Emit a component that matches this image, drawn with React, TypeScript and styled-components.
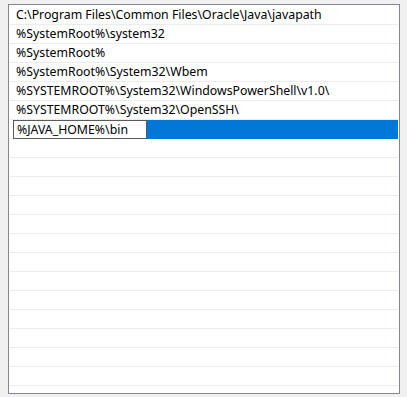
import React from 'react';
import styled, { createGlobalStyle } from 'styled-components';

const GlobalStyle = createGlobalStyle`
  html, body {
    margin: 0;
    background: #f0f0f0;
  }
`;

const Page = styled.div`
  width: 407px;
  height: 397px;
  padding: 4px 0 0 8px;
  box-sizing: border-box;
`;

const ListBox = styled.div`
  width: 392px;
  height: 390px;
  box-sizing: border-box;
  border: 1px solid #828790;
  padding: 1px;
  background: #fff;
  display: flex;
  flex-direction: column;
  overflow: hidden;
`;

const Row = styled.div<{ $editing?: boolean }>`
  flex: 0 0 18px;
  display: flex;
  align-items: center;
  padding-left: ${(p) => (p.$editing ? '3px' : '6px')};
  border-bottom: 1px solid #ececec;
  font-family: 'Noto Sans', 'Open Sans', sans-serif;
  font-size: 12.3px;
  line-height: 18px;
  color: #000;
  white-space: nowrap;
`;

const Editor = styled.div`
  align-self: flex-start;
  width: 134px;
  height: 19px;
  box-sizing: border-box;
  margin-bottom: -1px;
  border: 1px solid #5a5a5a;
  background: #fff;
  padding-left: 3px;
  line-height: 17px;
`;

const Highlight = styled.div`
  align-self: flex-start;
  flex: 1;
  height: 19px;
  margin-bottom: -1px;
  background: #0078d7;
`;

const paths = [
  'C:\\Program Files\\Common Files\\Oracle\\Java\\javapath',
  '%SystemRoot%\\system32',
  '%SystemRoot%',
  '%SystemRoot%\\System32\\Wbem',
  '%SYSTEMROOT%\\System32\\WindowsPowerShell\\v1.0\\',
  '%SYSTEMROOT%\\System32\\OpenSSH\\',
];

const EMPTY_ROWS = 13;

const App: React.FC = () => (
  <>
    <GlobalStyle />
    <Page>
      <ListBox>
        {paths.map((p) => (
          <Row key={p}>{p}</Row>
        ))}
        <Row $editing>
          <Editor>%JAVA_HOME%\bin</Editor>
          <Highlight />
        </Row>
        {Array.from({ length: EMPTY_ROWS }, (_, i) => (
          <Row key={'empty' + i} />
        ))}
      </ListBox>
    </Page>
  </>
);

export default App;
